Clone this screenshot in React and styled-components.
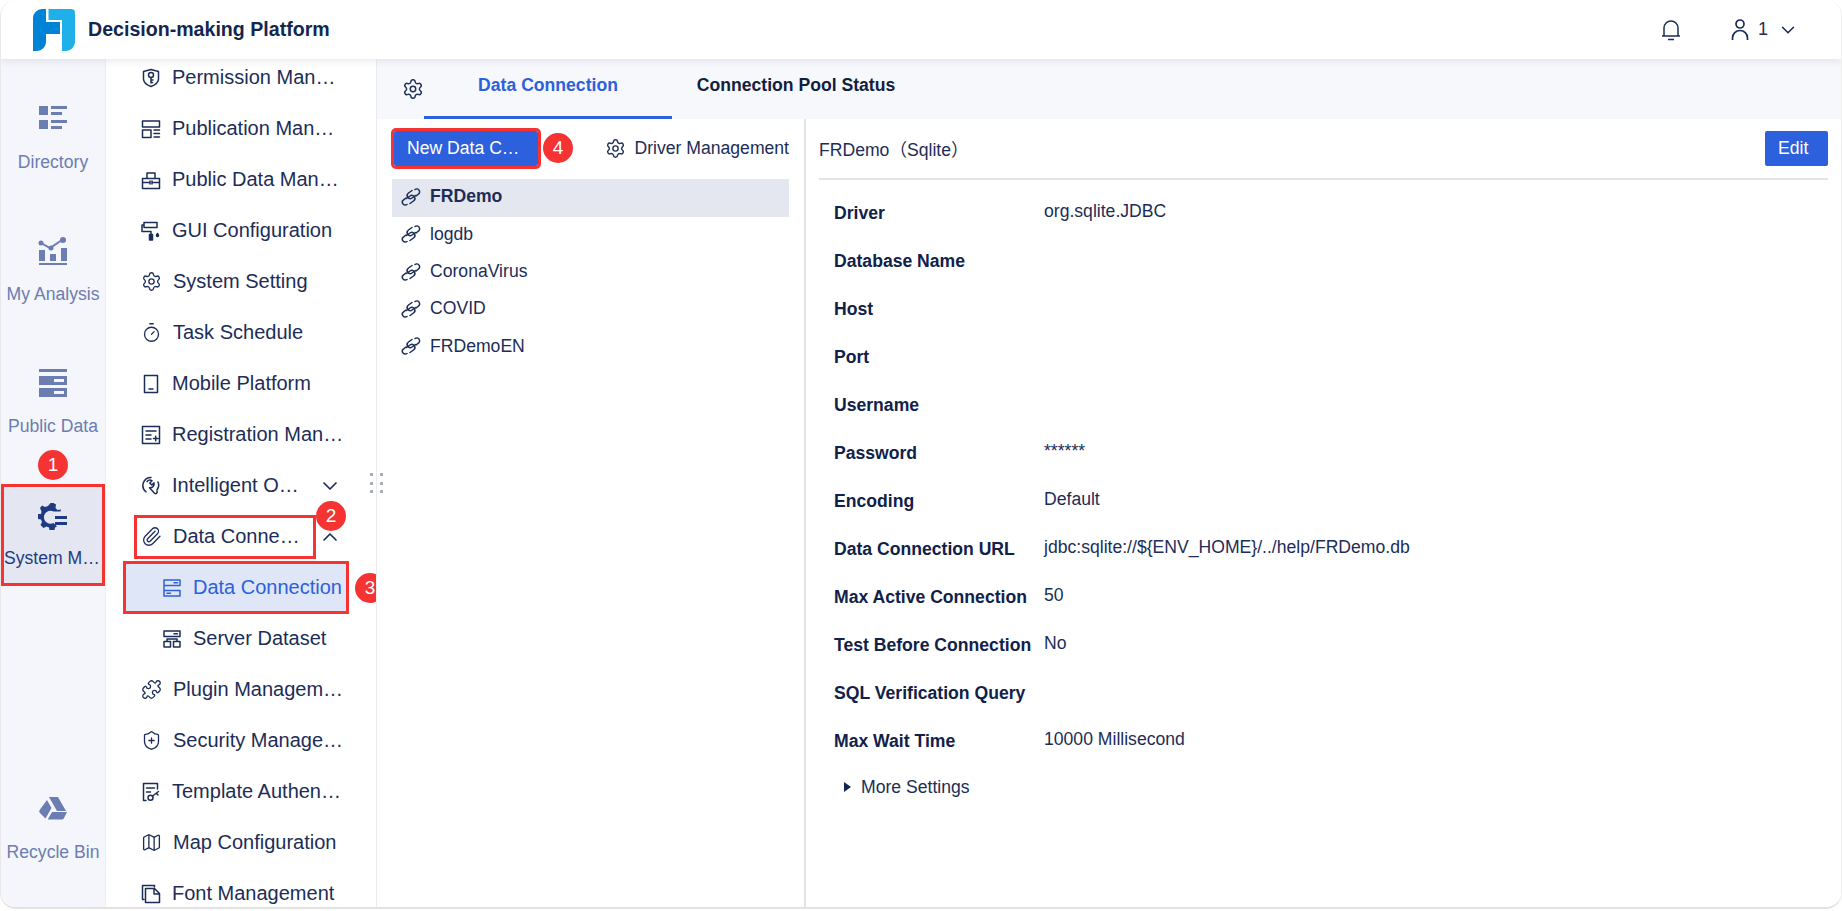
import React from "react";
import styled, { createGlobalStyle } from "styled-components";
import { Settings, Timer, Puzzle, ShieldPlus, Map as MapIcon, ChevronDown, ChevronUp, Paperclip } from "lucide-react";

const GlobalStyle = createGlobalStyle`
  html, body { margin: 0; padding: 0; height: 100%; background: #fff; overflow: hidden; }
  * { box-sizing: border-box; }
  body { font-family: "Liberation Sans", Arial, sans-serif; color: #1c2b50; }
`;

const NAVY = "#1c2d57";
const BLUE = "#2c60dc";
const RED = "#f53333";

const Frame = styled.div`
  height: 909px;
  display: flex;
  flex-direction: column;
  border-radius: 16px;
  border-bottom: 2px solid #e2e2e2;
  border-left: 1px solid #e8e8e8;
  border-right: 1px solid #eee;
  overflow: hidden;
`;

const Header = styled.header`
  height: 59px;
  flex: none;
  display: flex;
  align-items: center;
  padding: 0 42px 0 32px;
  background: #fff;
  box-shadow: 0 2px 8px rgba(30, 40, 70, 0.1);
  position: relative;
  z-index: 2;
`;

const Title = styled.div`
  margin-left: 13px;
  font-size: 19.6px;
  font-weight: 700;
  color: #14264f;
`;

const HeaderTools = styled.div`
  margin-left: auto;
  display: flex;
  align-items: center;
  color: ${NAVY};
`;

const UserBlock = styled.div`
  margin-left: 50px;
  display: flex;
  align-items: center;
  gap: 9px;
  font-size: 18px;
`;

const Body = styled.div`
  flex: 1;
  min-height: 0;
  display: flex;
`;

const Rail = styled.nav`
  width: 105px;
  flex: none;
  display: flex;
  flex-direction: column;
  gap: 30px;
  padding: 29px 0 27px;
  background: #f4f6fb;
  border-right: 1px solid #eceef3;
`;

const RailItem = styled.div`
  position: relative;
  height: 102px;
  flex: none;
  display: flex;
  flex-direction: column;
  align-items: center;
  padding-top: 16px;
  color: ${(p) => (p.$active ? "#1e3a80" : "#6c7db1")};
  background: ${(p) => (p.$active ? "#e4e7f1" : "transparent")};
  margin-top: ${(p) => (p.$bottom ? "auto" : "0")};
  outline: ${(p) => (p.$active ? `3px solid ${RED}` : "none")};
  outline-offset: -3px;
`;

const RailLabel = styled.div`
  margin-top: 17px;
  width: 98px;
  font-size: 17.6px;
  line-height: 22px;
  text-align: center;
  white-space: nowrap;
  overflow: hidden;
  text-overflow: ellipsis;
`;

const Badge = styled.span`
  position: absolute;
  top: ${(p) => p.$top}px;
  left: ${(p) => p.$left}px;
  width: 30px;
  height: 30px;
  border-radius: 50%;
  display: flex;
  align-items: center;
  justify-content: center;
  background: ${RED};
  color: #fff;
  font-size: 19px;
  z-index: 3;
`;

const Menu = styled.aside`
  width: 271px;
  flex: none;
  background: #fff;
  border-right: 1px solid #e9ebf0;
  overflow: hidden;
`;

const MenuList = styled.div`
  margin-top: -7px;
  display: flex;
  flex-direction: column;
`;

const MenuRow = styled.div`
  height: 51px;
  flex: none;
  display: flex;
  align-items: center;
  padding-left: 31px;
  color: ${NAVY};
`;

const RowMain = styled.div`
  position: relative;
  height: 38px;
  flex: ${(p) => (p.$arrow ? "none" : "1")};
  width: ${(p) => (p.$arrow ? "176px" : "auto")};
  min-width: 0;
  display: flex;
  align-items: center;
  gap: 11px;
  padding: 0 ${(p) => (p.$arrow ? "9px" : "32px")} 0 4px;
  outline: ${(p) => (p.$marked ? `3px solid ${RED}` : "none")};
  outline-offset: 0;
`;

const RowText = styled.span`
  flex: 1;
  min-width: 0;
  font-size: 20px;
  white-space: nowrap;
  overflow: hidden;
  text-overflow: ellipsis;
`;

const RowArrow = styled.span`
  margin-left: 5px;
  display: flex;
  color: ${NAVY};
`;

const SubRow = styled.div`
  position: relative;
  height: 51px;
  flex: none;
  width: 224px;
  margin-left: 18px;
  display: flex;
  align-items: center;
  gap: 11px;
  padding: 0 3px 0 38px;
  color: ${(p) => (p.$active ? BLUE : NAVY)};
  background: ${(p) => (p.$active ? "#dfe6f7" : "transparent")};
  outline: ${(p) => (p.$active ? `3px solid ${RED}` : "none")};
  outline-offset: -2px;
`;

const Main = styled.main`
  position: relative;
  flex: 1;
  min-width: 0;
  display: flex;
  flex-direction: column;
`;

const DragHandle = styled.div`
  position: absolute;
  left: -7px;
  top: 414px;
  width: 13px;
  display: grid;
  grid-template-columns: 3px 3px;
  justify-content: space-between;
  row-gap: 5.5px;
  z-index: 1;
  span { height: 3px; background: #a9adb6; }
`;

const TabBar = styled.div`
  height: 60px;
  flex: none;
  display: flex;
  background: #f7f8fc;
  padding-left: 47px;
  position: relative;
`;

const TabGear = styled.span`
  position: absolute;
  left: 25px;
  top: 19px;
  display: flex;
  color: ${NAVY};
`;

const Tab = styled.div`
  width: 248px;
  display: flex;
  align-items: center;
  justify-content: center;
  padding-bottom: 5px;
  font-size: 17.6px;
  font-weight: 700;
  color: ${(p) => (p.$active ? BLUE : "#10203f")};
  border-bottom: 3px solid ${(p) => (p.$active ? BLUE : "transparent")};
`;

const Split = styled.div`
  flex: 1;
  min-height: 0;
  display: flex;
`;

const ConnPanel = styled.section`
  width: 429px;
  flex: none;
  border-right: 2px solid #e4e4e6;
  padding: 12px 15px 0 15px;
`;

const Toolbar = styled.div`
  height: 35px;
  display: flex;
  align-items: center;
  padding-left: 2px;
  margin-bottom: 13px;
`;

const PrimaryButton = styled.button`
  position: relative;
  height: 35px;
  width: ${(p) => p.$width}px;
  flex: none;
  border: 0;
  padding: 0 13px;
  background: ${BLUE};
  border-radius: 2px;
  color: #fff;
  font: inherit;
  font-size: 17.6px;
  text-align: left;
  outline: ${(p) => (p.$marked ? `3px solid ${RED}` : "none")};
`;

const ButtonText = styled.span`
  display: block;
  white-space: nowrap;
  overflow: hidden;
  text-overflow: ellipsis;
`;

const ToolLink = styled.div`
  margin-left: auto;
  display: flex;
  align-items: center;
  gap: 9px;
  font-size: 17.6px;
  color: ${NAVY};
`;

const ConnList = styled.div`
  display: flex;
  flex-direction: column;
`;

const ConnRow = styled.div`
  height: ${(p) => (p.$active ? "38px" : "37.4px")};
  display: flex;
  align-items: center;
  gap: 9px;
  padding-left: 9px;
  padding-bottom: 3px;
  font-size: 17.6px;
  font-weight: ${(p) => (p.$active ? 700 : 400)};
  color: ${NAVY};
  background: ${(p) => (p.$active ? "#e4e7ef" : "transparent")};
`;

const DetailPanel = styled.section`
  flex: 1;
  min-width: 0;
  padding: 0 13px;
`;

const DetailHead = styled.div`
  height: 61px;
  display: flex;
  align-items: center;
  justify-content: space-between;
  border-bottom: 2px solid #e4e4e6;
  font-size: 17.6px;
  color: ${NAVY};
  font-family: "Liberation Sans", "Noto Sans CJK SC", sans-serif;
`;

const DetailBody = styled.div`
  padding: 9px 0 0 15px;
`;

const DetailRow = styled.div`
  height: 48px;
  display: grid;
  grid-template-columns: 210px 1fr;
  align-items: center;
  font-size: 17.6px;
`;

const DetailLabel = styled.span`
  font-weight: 700;
  color: #10214a;
  white-space: nowrap;
`;

const DetailValue = styled.span`
  color: ${NAVY};
  padding-bottom: 4px;
`;

const MoreRow = styled.div`
  height: 44px;
  display: flex;
  align-items: center;
  gap: 10px;
  padding-left: 10px;
  font-size: 17.6px;
  color: ${NAVY};
`;

const Caret = styled.span`
  width: 0;
  height: 0;
  border-left: 7px solid #14264f;
  border-top: 5px solid transparent;
  border-bottom: 5px solid transparent;
`;

const Logo = () => (
  <svg width="42" height="42" viewBox="0 0 42 42">
    <path fill="#0082d6" d="M9 0h4v13h14v12H13v8a9 9 0 0 1-9 9H0V9a9 9 0 0 1 9-9Z" />
    <path fill="#1fafe9" d="M15.5 0H38a4 4 0 0 1 4 4v29a9 9 0 0 1-9 9h-4V11H15.5Z" />
  </svg>
);

const Ico = ({ children, size = 20 }) => (
  <svg width={size} height={size} viewBox="0 0 20 20" fill="none" stroke="currentColor" strokeWidth="1.5" strokeLinecap="round" strokeLinejoin="round" style={{ flex: "none" }}>
    {children}
  </svg>
);

const icons = {
  permission: (
    <Ico>
      <path d="M10 1.5 17.5 3.5V11c0 3.5-3.5 6-7.5 7.500C6 17 2.500 14.500 2.500 11V3.500Z" />
      <circle cx="10" cy="7" r="2.500" />
      <path d="M10 9.500V15M10 12h2M10 14.500h1.500" />
    </Ico>
  ),
  publication: (
    <Ico>
      <path d="M1.500 2h17v6h-17ZM1.500 11h8.500v7.500H1.500ZM13 11h5.500M13 14.500h5.500M13 18h5.500" />
    </Ico>
  ),
  publicData: (
    <Ico>
      <path d="M1.500 8.500h17v10h-17ZM6 8.500V3h8v5.500M1.500 12.500H9M11 12.500h7.500M9 11v3M11 11v3" />
    </Ico>
  ),
  gui: (
    <Ico>
      <path d="M3 1.500h13v5H3ZM3 4H1v6.500h9v3" />
      <path d="M8.500 13.500h3V19h-3Z" fill="currentColor" />
      <path d="M16.500 11.500c1 1.200 1.800 2 1.800 3a1.800 1.800 0 0 1-3.600 0c0-1 .800-1.800 1.800-3Z" fill="currentColor" stroke="none" />
    </Ico>
  ),
  mobile: (
    <Ico>
      <path d="M3.500 1.500h13v17h-13ZM8 15h4" />
    </Ico>
  ),
  registration: (
    <Ico>
      <path d="M1.500 1.500h17v17h-17ZM5 6h10M5 10h5M5 14h5M12.500 13.500h4.500M14.700 11.200v4.600" />
    </Ico>
  ),
  intelligent: (
    <Ico>
      <path d="M10 1.500a8 8 0 0 0-5 14.300M17 6a8 8 0 0 1-1 8" />
      <path d="M6 5.500a4 4 0 0 1 5-.800L8.800 7l2 2L13 6.800a4 4 0 0 1-4.500 5l5 5.500c1.200 1.200 3.500-.800 2.500-2.200" />
    </Ico>
  ),
  serverData: (
    <Ico>
      <path d="M2 2h16v5.500H2ZM2 12.500h16V18H2ZM2 7.500v5M18 7.500h0M12 4.800h3.500M5 15.200h3.500" />
    </Ico>
  ),
  dataset: (
    <Ico>
      <path d="M2 2h16v5.500H2ZM2 12.500h6.500V18H2ZM11.500 12.500H18V18h-6.500ZM5 12.500V10h10v2.500M12 4.800h3.500" />
    </Ico>
  ),
  template: (
    <Ico>
      <path d="M16.500 7V1.500h-14v17H5M5.500 6h8M5.500 10h4" />
      <circle cx="9.500" cy="15.800" r="2.500" />
      <path d="M11.500 14 17.500 9.500M15.300 11.200l1.700 1.800" />
    </Ico>
  ),
  font: (
    <Ico>
      <path d="M3 15.500H1.500v-14h12V3" />
      <path d="M4.500 4.500h9l5 5v9h-14ZM13 4.500V10h5.500" />
    </Ico>
  ),
  link: (
    <Ico>
      <path d="M11 3.500 7.500 6a3 3 0 0 0 3.500 5l3.500-2.500" />
      <path d="M14 2.500a2.900 2.900 0 0 1 3.400 4.700L15 9" />
      <path d="M9 16.500l3.500-2.500a3 3 0 0 0-3.500-5L5.500 11.500" />
      <path d="M6 17.500a2.900 2.900 0 0 1-3.400-4.700L5 11" />
    </Ico>
  ),
  bell: (
    <svg width="20" height="22" viewBox="0 0 20 22" fill="none" stroke="currentColor" strokeWidth="1.500">
      <path d="M1 17h18M3 17V9a7 7 0 0 1 14 0v8M7 20.500h6" />
    </svg>
  ),
  user: (
    <svg width="18" height="22" viewBox="0 0 18 22" fill="none" stroke="currentColor" strokeWidth="1.700">
      <circle cx="9" cy="5" r="4" />
      <path d="M1.500 21v-2a7.500 7.500 0 0 1 15 0v2" />
    </svg>
  ),
};

const lucide = (Cmp, rotate) => <Cmp size={21} strokeWidth={1.5} style={{ flex: "none", transform: rotate ? `rotate(${rotate}deg)` : undefined }} />;

const RailIcon = ({ kind }) => {
  const fill = "currentColor";
  return (
    <svg width="30" height="30" viewBox="0 0 30 30" fill={fill}>
      {kind === "directory" && (
        <path d="M1 2h9v9H1ZM13 2h16v3H13ZM13 8h11v3H13ZM1 16h9v9H1ZM13 16h16v3H13ZM13 22h11v3H13Z" />
      )}
      {kind === "analysis" && (
        <>
          <path d="M1 14h6v11H1ZM12 18h6v7h-6ZM23 12h6v13h-6ZM1 27h28v2H1Z" />
          <path d="M3 7l9 5 12-8" fill="none" stroke={fill} strokeWidth="2" />
          <circle cx="3" cy="7" r="2.500" />
          <circle cx="13" cy="12" r="2.500" />
          <circle cx="25" cy="4" r="3" />
        </>
      )}
      {kind === "public" && (
        <path fillRule="evenodd" d="M1 1h28v3H1ZM1 8h28v9H1ZM16 11v3h10v-3ZM1 20h28v9H1ZM16 23v3h10v-3Z" />
      )}
      {kind === "system" && (
        <>
          <path d="M23 9.500l-3.500.500-2-2 .500-3.500-2.500-1.500H12.500L10 6l-3 1-3-1.500L2 8l1.500 3.500L3 14H0v5l3 .500 1 2.500-1.500 3 3 3 3-1.500 2.500 1 .500 2.500h5l.500-2.500 2-1-3.500-3.500a6.500 6.500 0 1 1 0-11.500h7Z" />
          <path d="M17 16h12v3H17ZM17 22h12v3H17Z" />
        </>
      )}
      {kind === "recycle" && (
        <path d="M11 3h9l8 14h-9ZM9 6l4.500 8-6 10.500L2 19c-1-1-1-2 0-3.500ZM10 25l4-7h15l-3 6c-.500 1-1.500 1.500-3 1.500H10Z" />
      )}
    </svg>
  );
};

const railItems = [
  { label: "Directory", kind: "directory" },
  { label: "My Analysis", kind: "analysis" },
  { label: "Public Data", kind: "public" },
  { label: "System Management", kind: "system", active: true },
];

const menuItems = [
  { text: "Permission Management", icon: icons.permission },
  { text: "Publication Management", icon: icons.publication },
  { text: "Public Data Management", icon: icons.publicData },
  { text: "GUI Configuration", icon: icons.gui },
  { text: "System Setting", icon: lucide(Settings) },
  { text: "Task Schedule", icon: lucide(Timer) },
  { text: "Mobile Platform", icon: icons.mobile },
  { text: "Registration Management", icon: icons.registration },
  { text: "Intelligent Operation", icon: icons.intelligent, arrow: "down" },
  { text: "Data Connection", icon: lucide(Paperclip, 0), arrow: "up", marked: true, badge: 2 },
  { text: "Data Connection", icon: icons.serverData, sub: true, active: true, badge: 3 },
  { text: "Server Dataset", icon: icons.dataset, sub: true },
  { text: "Plugin Management", icon: lucide(Puzzle) },
  { text: "Security Management", icon: lucide(ShieldPlus) },
  { text: "Template Authentication", icon: icons.template },
  { text: "Map Configuration", icon: lucide(MapIcon) },
  { text: "Font Management", icon: icons.font },
];

const connections = ["FRDemo", "logdb", "CoronaVirus", "COVID", "FRDemoEN"];

const details = [
  ["Driver", "org.sqlite.JDBC"],
  ["Database Name", ""],
  ["Host", ""],
  ["Port", ""],
  ["Username", ""],
  ["Password", "******"],
  ["Encoding", "Default"],
  ["Data Connection URL", "jdbc:sqlite://${ENV_HOME}/../help/FRDemo.db"],
  ["Max Active Connection", "50"],
  ["Test Before Connection", "No"],
  ["SQL Verification Query", ""],
  ["Max Wait Time", "10000 Millisecond"],
];

export default function App() {
  return (
    <>
      <GlobalStyle />
      <Frame>
        <Header>
          <Logo />
          <Title>Decision-making Platform</Title>
          <HeaderTools>
            {icons.bell}
            <UserBlock>
              {icons.user}
              <span>1</span>
              <ChevronDown size={22} strokeWidth={1.7} />
            </UserBlock>
          </HeaderTools>
        </Header>
        <Body>
          <Rail>
            {railItems.map((item) => (
              <RailItem key={item.kind} $active={item.active}>
                {item.active && <Badge $top={-34} $left={37}>1</Badge>}
                <RailIcon kind={item.kind} />
                <RailLabel>{item.label}</RailLabel>
              </RailItem>
            ))}
            <RailItem $bottom>
              <RailIcon kind="recycle" />
              <RailLabel>Recycle Bin</RailLabel>
            </RailItem>
          </Rail>
          <Menu>
            <MenuList>
              {menuItems.map((item, i) =>
                item.sub ? (
                  <SubRow key={i} $active={item.active}>
                    {item.badge && <Badge $top={11} $left={231}>{item.badge}</Badge>}
                    {item.icon}
                    <RowText>{item.text}</RowText>
                  </SubRow>
                ) : (
                  <MenuRow key={i}>
                    <RowMain $arrow={!!item.arrow} $marked={item.marked}>
                      {item.badge && <Badge $top={-17} $left={179}>{item.badge}</Badge>}
                      {item.icon}
                      <RowText>{item.text}</RowText>
                    </RowMain>
                    {item.arrow && (
                      <RowArrow>
                        {item.arrow === "up" ? <ChevronUp size={24} strokeWidth={1.7} /> : <ChevronDown size={24} strokeWidth={1.7} />}
                      </RowArrow>
                    )}
                  </MenuRow>
                )
              )}
            </MenuList>
          </Menu>
          <Main>
            <DragHandle>
              <span /><span /><span /><span /><span /><span />
            </DragHandle>
            <TabBar>
              <TabGear><Settings size={22} strokeWidth={1.6} /></TabGear>
              <Tab $active>Data Connection</Tab>
              <Tab>Connection Pool Status</Tab>
            </TabBar>
            <Split>
              <ConnPanel>
                <Toolbar>
                  <PrimaryButton $width={144} $marked>
                    <ButtonText>New Data Connection</ButtonText>
                    <Badge $top={2} $left={149}>4</Badge>
                  </PrimaryButton>
                  <ToolLink>
                    <Settings size={21} strokeWidth={1.6} />
                    <span>Driver Management</span>
                  </ToolLink>
                </Toolbar>
                <ConnList>
                  {connections.map((name, i) => (
                    <ConnRow key={name} $active={i === 0}>
                      {icons.link}
                      <span>{name}</span>
                    </ConnRow>
                  ))}
                </ConnList>
              </ConnPanel>
              <DetailPanel>
                <DetailHead>
                  <span>FRDemo（Sqlite）</span>
                  <PrimaryButton $width={63}>Edit</PrimaryButton>
                </DetailHead>
                <DetailBody>
                  {details.map(([label, value]) => (
                    <DetailRow key={label}>
                      <DetailLabel>{label}</DetailLabel>
                      <DetailValue>{value}</DetailValue>
                    </DetailRow>
                  ))}
                  <MoreRow>
                    <Caret />
                    <span>More Settings</span>
                  </MoreRow>
                </DetailBody>
              </DetailPanel>
            </Split>
          </Main>
        </Body>
      </Frame>
    </>
  );
}
